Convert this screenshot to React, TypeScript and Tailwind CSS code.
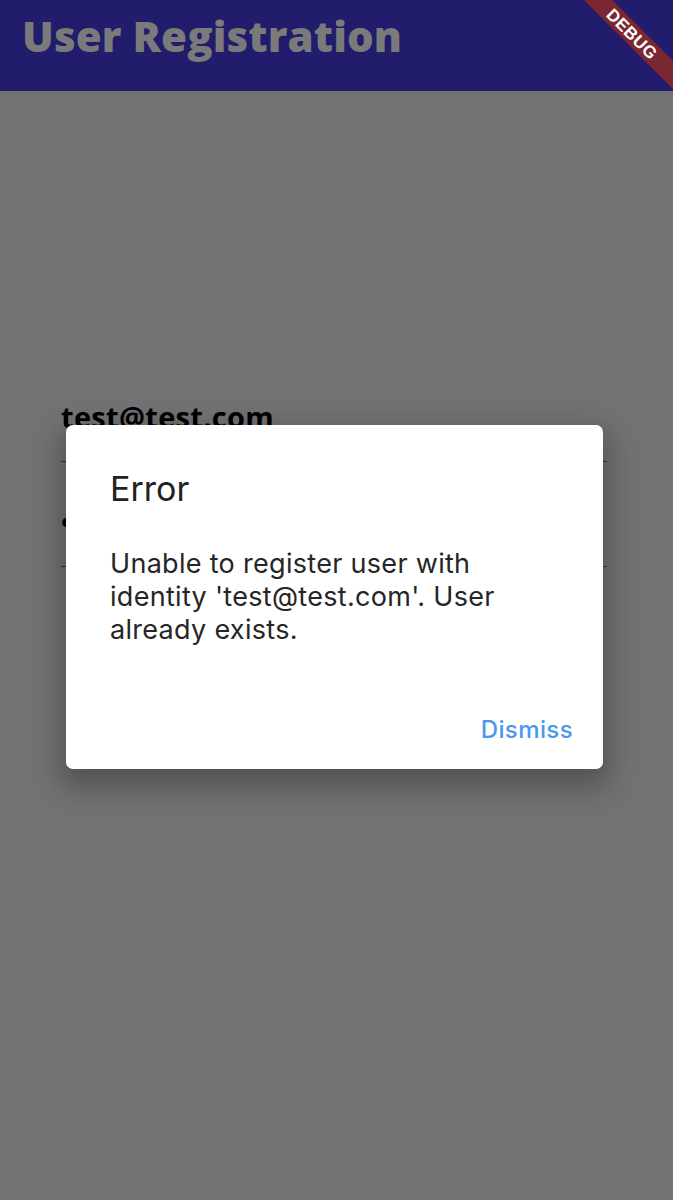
import React from "react";

export default function App() {
  return (
    <div className="relative w-[673px] h-[1200px] overflow-hidden bg-[#717274]">
      <header className="relative h-[91px] overflow-hidden bg-[#211c6b] pl-[22px] pt-[11px]">
        <h1
          className="text-[42px] leading-[50px] font-extrabold text-[#7a7a7a] tracking-[0.1px]"
          style={{ fontFamily: '"Open Sans", "Noto Sans", sans-serif' }}
        >
          User Registration
        </h1>
        <div
          className="absolute left-[562px] top-[24px] flex h-[20px] w-[140px] rotate-45 items-center justify-center bg-[#7b2732] text-[17px] font-bold leading-none tracking-[0.5px] text-white"
          style={{ fontFamily: '"Liberation Sans", Arial, sans-serif' }}
        >
          DEBUG
        </div>
      </header>

      <main
        className="flex flex-col pl-[61px] pr-[66px] pt-[309px]"
        style={{ fontFamily: '"Open Sans", "Noto Sans", sans-serif' }}
      >
        <div className="border-b border-[#333436] pb-[27px]">
          <div className="text-[29px] font-bold leading-[34px] tracking-[0.3px] text-black">test@test.com</div>
        </div>
        <div className="mt-[43px] border-b border-[#333436] pb-[27px]">
          <div className="text-[28px] font-bold leading-[34px] text-black">••••••••</div>
        </div>
      </main>

      <div
        className="absolute left-[66px] top-[425px] flex h-[344px] w-[537px] flex-col rounded-[7px] bg-white pl-[44px] pr-[70px] pt-[44px] shadow-[0_12px_28px_6px_rgba(0,0,0,0.28)]"
        style={{ fontFamily: 'Inter, "Noto Sans", sans-serif' }}
      >
        <div className="text-[34px] leading-[40px] text-[#222222]">Error</div>
        <p className="mt-[38px] text-[27px] leading-[33px] tracking-[0.3px] text-[#262626]">
          Unable to register user with identity 'test@test.com'. User already exists.
        </p>
        <div className="mt-auto mb-[25px] -mr-[40px] flex justify-end">
          <span className="text-[24px] font-medium leading-[28px] tracking-[0.4px] text-[#4a98ee]">Dismiss</span>
        </div>
      </div>
    </div>
  );
}
